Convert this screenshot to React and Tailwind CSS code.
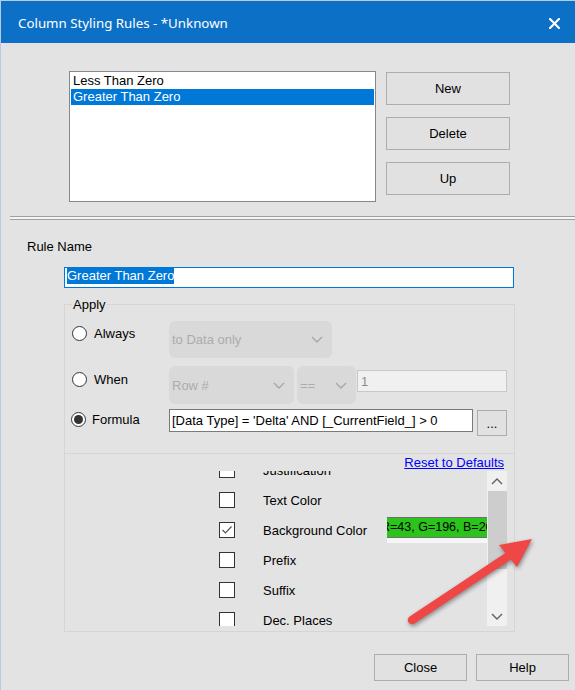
import React from 'react';

// small drawn glyphs used by the dialog controls
const Chevron = ({ up = false, className = '' }) => (
  <svg width="12" height="7" viewBox="0 0 12 7" fill="none" stroke="currentColor" strokeWidth="1.4" className={className}>
    <polyline points={up ? '1,6 6,1 11,6' : '1,1 6,6 11,1'} />
  </svg>
);

const Radio = ({ checked }) => (
  <span className="w-[15px] h-[15px] shrink-0 rounded-full border border-[#333] bg-white flex items-center justify-center">
    {checked && <span className="w-[9px] h-[9px] rounded-full bg-[#333]" />}
  </span>
);

const Check = ({ checked }) => (
  <span className="w-[16px] h-[16px] shrink-0 border border-[#333] bg-white flex items-center justify-center">
    {checked && (
      <svg width="12" height="10" viewBox="0 0 12 10">
        <polyline points="1.5,5 4.5,8 10.5,1.5" fill="none" stroke="#555" strokeWidth="1.2" />
      </svg>
    )}
  </span>
);

const WinButton = ({ children, className = '' }) => (
  <button className={`bg-[#e1e1e1] border border-[#adadad] text-[13px] text-black flex items-center justify-center ${className}`}>
    {children}
  </button>
);

const Combo = ({ text, className = '' }) => (
  <div className={`rounded-[6px] bg-[#d9d9d9] flex items-center justify-between pl-[3px] pr-[9px] text-[#acacac] ${className}`}>
    <span>{text}</span>
    <Chevron className="text-[#a8a8a8]" />
  </div>
);

const styleRows = [
  { label: 'Justification' },
  { label: 'Text Color' },
  { label: 'Background Color', checked: true, color: true },
  { label: 'Prefix' },
  { label: 'Suffix' },
  { label: 'Dec. Places' },
];

const App = () => {
  return (
    <div className="relative w-[575px] h-[690px] overflow-hidden bg-[#e3e3e3] border-l border-t border-[#b9cbe0] font-['Liberation_Sans',Arial,sans-serif] text-[13px] leading-[15px] text-black flex flex-col">
      {/* Title bar */}
      <div className="h-[42px] shrink-0 bg-[#0c70c7] flex items-center justify-between pl-[17px] pr-[15px] pt-[3px]">
        <span className="font-['Noto_Sans',sans-serif] text-[13.3px] text-white">Column Styling Rules - *Unknown</span>
        <svg width="11" height="11" viewBox="0 0 11 11" stroke="white" strokeWidth="2.2" strokeLinecap="square">
          <line x1="1" y1="1" x2="10" y2="10" />
          <line x1="10" y1="1" x2="1" y2="10" />
        </svg>
      </div>

      {/* Rule list + actions */}
      <div className="flex pl-[68px] pt-[28px] gap-[10px] shrink-0">
        <div className="w-[307px] h-[131px] border border-[#828790] bg-white p-[1px]">
          <div className="h-[16px] leading-[16px] pl-[2px]">Less Than Zero</div>
          <div className="h-[16px] leading-[16px] pl-[2px] bg-[#0078d7] text-white">Greater Than Zero</div>
        </div>
        <div className="flex flex-col gap-[12px] pt-[1px]">
          <WinButton className="w-[124px] h-[33px]">New</WinButton>
          <WinButton className="w-[124px] h-[33px]">Delete</WinButton>
          <WinButton className="w-[124px] h-[33px]">Up</WinButton>
        </div>
      </div>

      <div className="ml-[9px] mt-[14px] h-[4px] shrink-0 border-y border-[#a0a0a0] bg-[#f5f5f5]" />

      <div className="pl-[26px] mt-[19px] shrink-0">Rule Name</div>
      <div className="ml-[63px] mt-[13px] w-[450px] h-[21px] shrink-0 border border-[#0078d7] bg-white pl-[2px] flex items-start">
        <span className="h-[16px] leading-[16px] bg-[#0078d7] text-white">Greater Than Zero</span>
      </div>

      {/* Apply group */}
      <fieldset className="ml-[63px] mt-[9px] w-[451px] shrink-0 border border-[#d5d5d5] pt-[9px] pb-[17px]">
        <legend className="ml-[7px] px-[1px] leading-[15px]">Apply</legend>

        <div className="flex h-[37px]">
          <div className="w-[104px] pl-[7px] pt-[5px] flex items-start gap-[7px]">
            <Radio />
            <span>Always</span>
          </div>
          <Combo text="to Data only" className="w-[163px] h-[37px]" />
        </div>

        <div className="flex h-[38px] mt-[8px]">
          <div className="w-[104px] pl-[7px] pt-[6px] flex items-start gap-[7px]">
            <Radio />
            <span>When</span>
          </div>
          <Combo text="Row #" className="w-[125px] h-[38px]" />
          <Combo text="==" className="w-[59px] h-[38px] ml-[3px]" />
          <div className="ml-[1px] mt-[4px] w-[150px] h-[22px] bg-[#f0f0f0] border border-[#c8c8c8] pl-[3px] flex items-center text-[#8c8c8c]">1</div>
        </div>

        <div className="flex h-[27px] mt-[5px]">
          <div className="w-[104px] pl-[6px] pt-[3px] flex items-start gap-[6px]">
            <Radio checked />
            <span>Formula</span>
          </div>
          <div className="w-[304px] h-[23px] border border-[#7a7a7a] bg-white pl-[2px] flex items-center">
            [Data Type] = 'Delta' AND [_CurrentField_] &gt; 0
          </div>
          <WinButton className="ml-[4px] mt-[1px] w-[30px] h-[26px]">...</WinButton>
        </div>
      </fieldset>

      {/* Style overrides */}
      <div className="ml-[63px] w-[451px] h-[178px] shrink-0 border-x border-b border-[#d5d5d5] flex flex-col">
        <div className="pt-[1px] pr-[10px] text-right">
          <span className="text-[#0000ff] underline">Reset to Defaults</span>
        </div>
        <div className="mt-[1px] h-[155px] flex">
          <div className="flex-1 overflow-hidden">
            <div className="-mt-[16px]">
              {styleRows.map((row) => (
                <div key={row.label} className="h-[30px] pl-[154px] flex items-center">
                  <Check checked={row.checked} />
                  <span className="ml-[28px] w-[124px] shrink-0">{row.label}</span>
                  {row.color && (
                    <div className="w-[200px] h-[26px] shrink-0 bg-[#f6f6f6] overflow-hidden">
                      <div className="h-[21px] border-y border-[#6f6f6f] bg-[#2bc41a] flex items-center whitespace-nowrap text-[12.5px]">
                        <span className="-ml-[6px]">R=43, G=196, B=26</span>
                      </div>
                    </div>
                  )}
                </div>
              ))}
            </div>
          </div>
          <div className="w-[20px] mr-[7px] bg-[#f0f0f0] flex flex-col">
            <div className="h-[20px] flex items-center justify-center text-[#606060]">
              <Chevron up />
            </div>
            <div className="h-[78px] ml-[1px] bg-[#cdcdcd]" />
            <div className="flex-1" />
            <div className="h-[20px] flex items-center justify-center text-[#606060]">
              <Chevron />
            </div>
          </div>
        </div>
      </div>

      <div className="mt-[22px] flex justify-end gap-[9px] pr-[6px] shrink-0">
        <WinButton className="w-[93px] h-[27px]">Close</WinButton>
        <WinButton className="w-[93px] h-[27px]">Help</WinButton>
      </div>

      {/* callout arrow */}
      <svg
        className="absolute left-[399px] top-[529px] drop-shadow-[1px_2px_2px_rgba(0,0,0,0.4)]"
        width="145"
        height="105"
        viewBox="0 0 145 105"
      >
        <line x1="12" y1="90" x2="110" y2="25" stroke="#ef4646" strokeWidth="8.5" strokeLinecap="round" />
        <polygon points="132,9 99,15 117,37" fill="#ef4646" />
      </svg>
    </div>
  );
};

export default App;
